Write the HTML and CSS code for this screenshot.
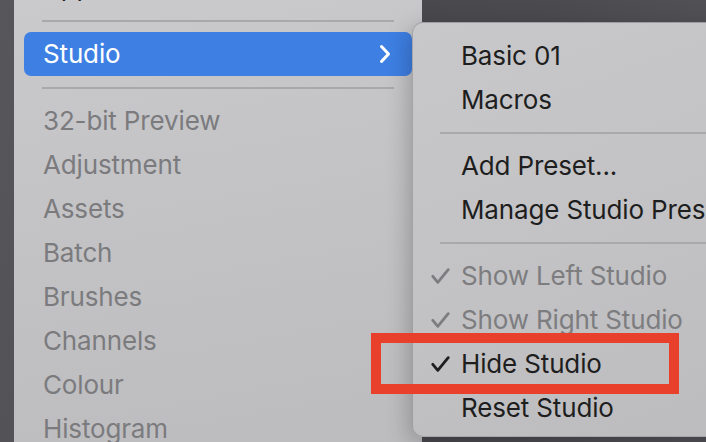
FILE: index.html
```html
<!DOCTYPE html>
<html lang="en">
<head>
<meta charset="utf-8">
<title>Studio menu</title>
<link rel="stylesheet" href="styles.css">
</head>
<body>
<div class="desktop">
  <div class="menu main-menu">
    <div class="item enabled">Apps</div>
    <div class="sep"><span></span></div>
    <div class="item highlighted">
      <span>Studio</span>
      <svg class="chevron" width="12" height="20" viewBox="0 0 12 20"><polyline points="2.5,2.5 9.5,10 2.5,17.5" fill="none" stroke="#fff" stroke-width="3" stroke-linecap="round" stroke-linejoin="round"/></svg>
    </div>
    <div class="sep"><span></span></div>
    <div class="item">32-bit Preview</div>
    <div class="item">Adjustment</div>
    <div class="item">Assets</div>
    <div class="item">Batch</div>
    <div class="item">Brushes</div>
    <div class="item">Channels</div>
    <div class="item">Colour</div>
    <div class="item">Histogram</div>
  </div>

  <div class="menu sub-menu">
    <div class="sub-item"><span class="check"></span><span>Basic 01</span></div>
    <div class="sub-item"><span class="check"></span><span>Macros</span></div>
    <div class="sub-sep"><span></span></div>
    <div class="sub-item"><span class="check"></span><span>Add Preset...</span></div>
    <div class="sub-item"><span class="check"></span><span>Manage Studio Presets...</span></div>
    <div class="sub-sep"><span></span></div>
    <div class="sub-item disabled"><span class="check"><svg width="19" height="16" viewBox="0 0 19 16"><polyline points="1.8,8.3 6.8,14.3 17.2,1.7" fill="none" stroke="currentColor" stroke-width="2.8" stroke-linecap="round" stroke-linejoin="round"/></svg></span><span>Show Left Studio</span></div>
    <div class="sub-item disabled"><span class="check"><svg width="19" height="16" viewBox="0 0 19 16"><polyline points="1.8,8.3 6.8,14.3 17.2,1.7" fill="none" stroke="currentColor" stroke-width="2.8" stroke-linecap="round" stroke-linejoin="round"/></svg></span><span>Show Right Studio</span></div>
    <div class="sub-item"><span class="check"><svg width="19" height="16" viewBox="0 0 19 16"><polyline points="1.8,8.3 6.8,14.3 17.2,1.7" fill="none" stroke="currentColor" stroke-width="2.8" stroke-linecap="round" stroke-linejoin="round"/></svg></span><span>Hide Studio</span></div>
    <div class="sub-item"><span class="check"></span><span>Reset Studio</span></div>
  </div>

  <div class="callout"></div>
</div>
</body>
</html>
```

FILE: styles.css
```css
html, body {
  margin: 0;
  padding: 0;
  overflow: hidden;
}

body {
  width: 706px;
  height: 442px;
  font-family: "Inter", "Liberation Sans", sans-serif;
  font-size: 26px;
  letter-spacing: -0.15px;
}

.desktop {
  position: relative;
  width: 706px;
  height: 442px;
  overflow: hidden;
  box-sizing: border-box;
  padding-left: 14px;
  background: linear-gradient(100deg, #56565b 0%, #47474c 40%, #4a4a4f 70%, #535358 100%);
}

.menu {
  box-sizing: border-box;
}

.main-menu {
  width: 408px;
  margin-top: -35px;
  padding: 0 10px;
  display: flex;
  flex-direction: column;
  background: linear-gradient(170deg, #cbcbce 0%, #c4c4c7 40%, #bbbbbe 100%);
  height: 520px;
}

.item {
  height: 44px;
  line-height: 44px;
  padding-left: 19px;
  color: #7b7b7e;
  white-space: nowrap;
  flex: none;
}

.item.enabled {
  color: #1e1e1e;
}

.item.highlighted {
  display: flex;
  align-items: center;
  justify-content: space-between;
  padding-right: 21px;
  background: #3e7fe3;
  border-radius: 7px;
  color: #ffffff;
}

.chevron {
  display: block;
}

.sep {
  height: 23px;
  flex: none;
  display: flex;
  align-items: center;
  padding: 0 18px;
}

.sep span {
  display: block;
  width: 100%;
  height: 2px;
  background: #a9a9ac;
}

.sub-menu {
  position: absolute;
  left: 412px;
  top: 22px;
  width: 330px;
  height: 415px;
  padding-top: 11px;
  border-radius: 11px;
  border: 1px solid rgba(0, 0, 0, 0.16);
  background: linear-gradient(160deg, #c8c8cb 0%, #c3c3c6 50%, #bcbcbf 100%);
  box-shadow: -4px 6px 22px rgba(0, 0, 0, 0.22);
  display: flex;
  flex-direction: column;
}

.sub-item {
  height: 44px;
  line-height: 44px;
  flex: none;
  display: flex;
  align-items: center;
  padding-left: 18px;
  color: #1e1e1e;
  white-space: nowrap;
}

.sub-item.disabled {
  color: #7d7d80;
}

.check {
  width: 19px;
  height: 16px;
  margin-right: 11px;
  flex: none;
  display: flex;
}

.check svg {
  display: block;
}

.sub-sep {
  height: 22px;
  flex: none;
  display: flex;
  align-items: center;
  padding-left: 27px;
}

.sub-sep span {
  display: block;
  width: 100%;
  height: 2px;
  background: #a9a9ac;
}

.callout {
  position: absolute;
  left: 371px;
  top: 333px;
  width: 308px;
  height: 61px;
  box-sizing: border-box;
  border: 10px solid #e8402a;
}
```
